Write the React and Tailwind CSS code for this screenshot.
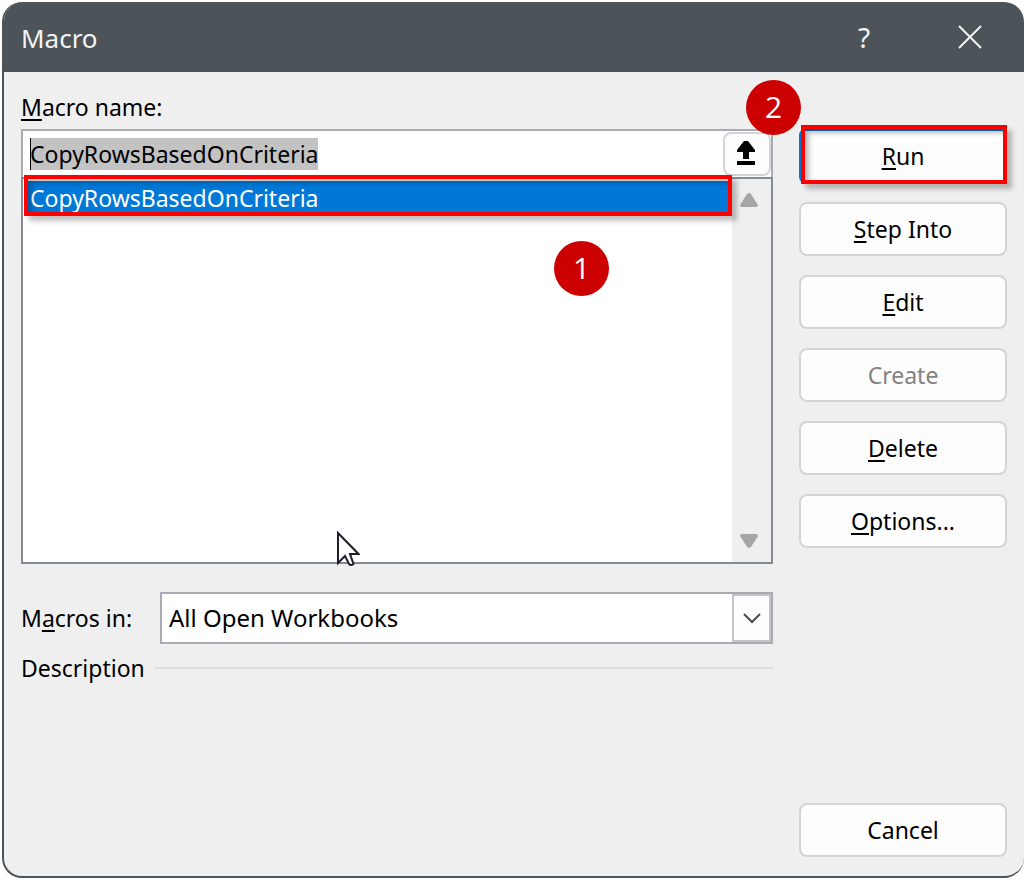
import { useEffect, useRef } from 'react';

const MACROS = ['CopyRowsBasedOnCriteria'];

const ACTIONS = [
  { key: 'S', rest: 'tep Into' },
  { key: 'E', rest: 'dit' },
  { key: 'C', rest: 'reate', disabled: true },
  { key: 'D', rest: 'elete' },
  { key: 'O', rest: 'ptions...' },
];

const BUTTON =
  'h-[54px] w-full rounded-lg border-2 border-[#d4d4d4] bg-[#fdfdfd] text-black disabled:text-[#838383]';

function AccessKey({ children }) {
  return <span className="underline decoration-2 underline-offset-[3px] [text-decoration-skip-ink:none]">{children}</span>;
}

function Step({ n, className }) {
  return (
    <span
      className={`absolute flex size-[55px] items-center justify-center rounded-full bg-[#cc0000] pb-0.5 font-['Open_Sans'] text-[30px] leading-none text-white ${className}`}
    >
      {n}
    </span>
  );
}

// red callout frame with its drop shadow
function Frame({ className }) {
  return (
    <span
      className={`pointer-events-none absolute border-4 border-[#ff0000] shadow-[5px_5px_5px_rgba(0,0,0,0.25),inset_4px_4px_5px_rgba(0,0,0,0.25)] ${className}`}
    />
  );
}

function TitleBar() {
  return (
    <header className="flex h-[70px] items-center bg-[#4c5459] pr-[41px] pl-[17px] text-[#f4f4f4]">
      <h1 className="flex-1 pt-0.5 text-[26px] leading-[36px]">Macro</h1>
      <button type="button" aria-label="Help" className="mr-[81px] w-6 text-[28px] leading-none">
        ?
      </button>
      <button type="button" aria-label="Close">
        <svg width="26" height="26" viewBox="0 0 26 26" fill="none" stroke="currentColor" strokeWidth="2">
          <path d="M2 2L24 24M24 2L2 24" />
        </svg>
      </button>
    </header>
  );
}

function MacroList() {
  return (
    <div className="relative flex h-[387px] border-2 border-[#868a93] bg-white">
      <ul role="listbox" aria-label="Macros" className="flex-1 pt-0.5 pl-0.5">
        {MACROS.map(name => (
          <li key={name} role="option" aria-selected="true" className="bg-[#0078d7] pl-[5px] leading-[34px] text-white">
            {name}
          </li>
        ))}
      </ul>
      <div className="flex w-[39px] flex-col items-center justify-between bg-[#efefef] pt-3.5 pr-1.5 pb-3.5">
        <svg width="18" height="14" viewBox="0 0 18 14" fill="#a6a6a6">
          <path d="M7 1Q9 -1 11 1L18 12Q18 14 16 14H2Q0 14 0 12Z" />
        </svg>
        <svg width="18" height="14" viewBox="0 0 18 14" fill="#a6a6a6">
          <path d="M7 13Q9 15 11 13L18 2Q18 0 16 0H2Q0 0 0 2Z" />
        </svg>
      </div>
      <Frame className="-top-1 right-[39px] left-px h-[41px]" />
      <Step n={1} className="top-[62px] right-[162px]" />
      <svg className="absolute top-[351px] left-[313px]" width="24" height="38" viewBox="0 0 24 38" fill="white" stroke="#1e1e2c" strokeWidth="2">
        <path d="M2 3V33L9 26L13 34Q15 36 17.500 34L14 24H22.500Z" />
      </svg>
    </div>
  );
}

export default function App() {
  const nameRef = useRef(null);

  useEffect(() => {
    nameRef.current.focus();
    nameRef.current.select();
  }, []);

  return (
    <div className="flex min-h-screen bg-white pt-0.5 pb-[3px] pl-0.5 font-['Noto_Sans',sans-serif] text-[23px] leading-[36px] text-black">
      <div className="flex flex-1 flex-col overflow-hidden rounded-[20px] border-b-2 border-l-2 border-[#4c5459] bg-[#efefef]">
        <TitleBar />
        <main className="grid flex-1 grid-cols-[1fr_208px] gap-[26px] pt-[17px] pr-[17px] pb-[19px] pl-[17px]">
          <div className="flex flex-col">
            <label htmlFor="macro-name" className="mb-1">
              <AccessKey>M</AccessKey>acro name:
            </label>
            <div className="relative flex h-12 items-center border-2 border-b-0 border-[#a9abb2] bg-white pl-[7px]">
              <input
                id="macro-name"
                ref={nameRef}
                defaultValue={MACROS[0]}
                className="h-[32px] min-w-0 flex-1 leading-[32px] outline-none selection:bg-[#c3c3c3] selection:text-black"
              />
              <span className="absolute left-[7px] h-[32px] w-px bg-black" />
              <button type="button" aria-label="Go to macro" className="flex h-[44px] w-12 items-center justify-center rounded-lg border-2 border-[#d4d4d4] bg-[#fdfdfd] pr-0.5 pb-0.5">
                <svg width="18" height="26" viewBox="0 0 18 26" fill="black">
                  <path d="M7 1H11L18 10V12H12V19H6V12H0V10ZM0 21H18V25H0Z" />
                </svg>
              </button>
            </div>
            <MacroList />

            <div className="mt-7 flex items-center">
              <label htmlFor="macros-in" className="w-[139px]">
                M<AccessKey>a</AccessKey>cros in:
              </label>
              <div className="relative flex-1">
                <select id="macros-in" className="h-[52px] w-full appearance-none border-2 border-[#a9abb2] bg-white pl-[7px] text-[24px]">
                  <option>All Open Workbooks</option>
                </select>
                <span className="pointer-events-none absolute top-0.5 right-0.5 bottom-0.5 flex w-[39px] items-center justify-center border-2 border-[#c4c4c8] bg-[#fdfdfd]">
                  <svg width="18" height="12" viewBox="0 0 18 12" fill="none" stroke="#4a4a4a" strokeWidth="2">
                    <path d="M1 2L9 10L17 2" />
                  </svg>
                </span>
              </div>
            </div>

            <div className="mt-1.5 flex items-center gap-2.5">
              <h2>Description</h2>
              <div className="h-0.5 flex-1 bg-[#dcdcdc]" />
            </div>
          </div>

          <div className="flex flex-col gap-[19px] pt-10">
            <div className="relative">
              <button type="button" className="h-[54px] w-full rounded-md border-2 border-[#0078d7] bg-[#fdfdfd]">
                <AccessKey>R</AccessKey>un
              </button>
              <Frame className="-top-1 right-0 left-0.5 h-[59px]" />
              <Step n={2} className="-top-[49px] -left-[53px]" />
            </div>
            {ACTIONS.map(({ key, rest, disabled }) => (
              <button key={key} type="button" disabled={disabled} className={BUTTON}>
                {disabled ? key : <AccessKey>{key}</AccessKey>}
                {rest}
              </button>
            ))}
            <button type="button" className={`${BUTTON} mt-auto`}>Cancel</button>
          </div>
        </main>
      </div>
    </div>
  );
}
